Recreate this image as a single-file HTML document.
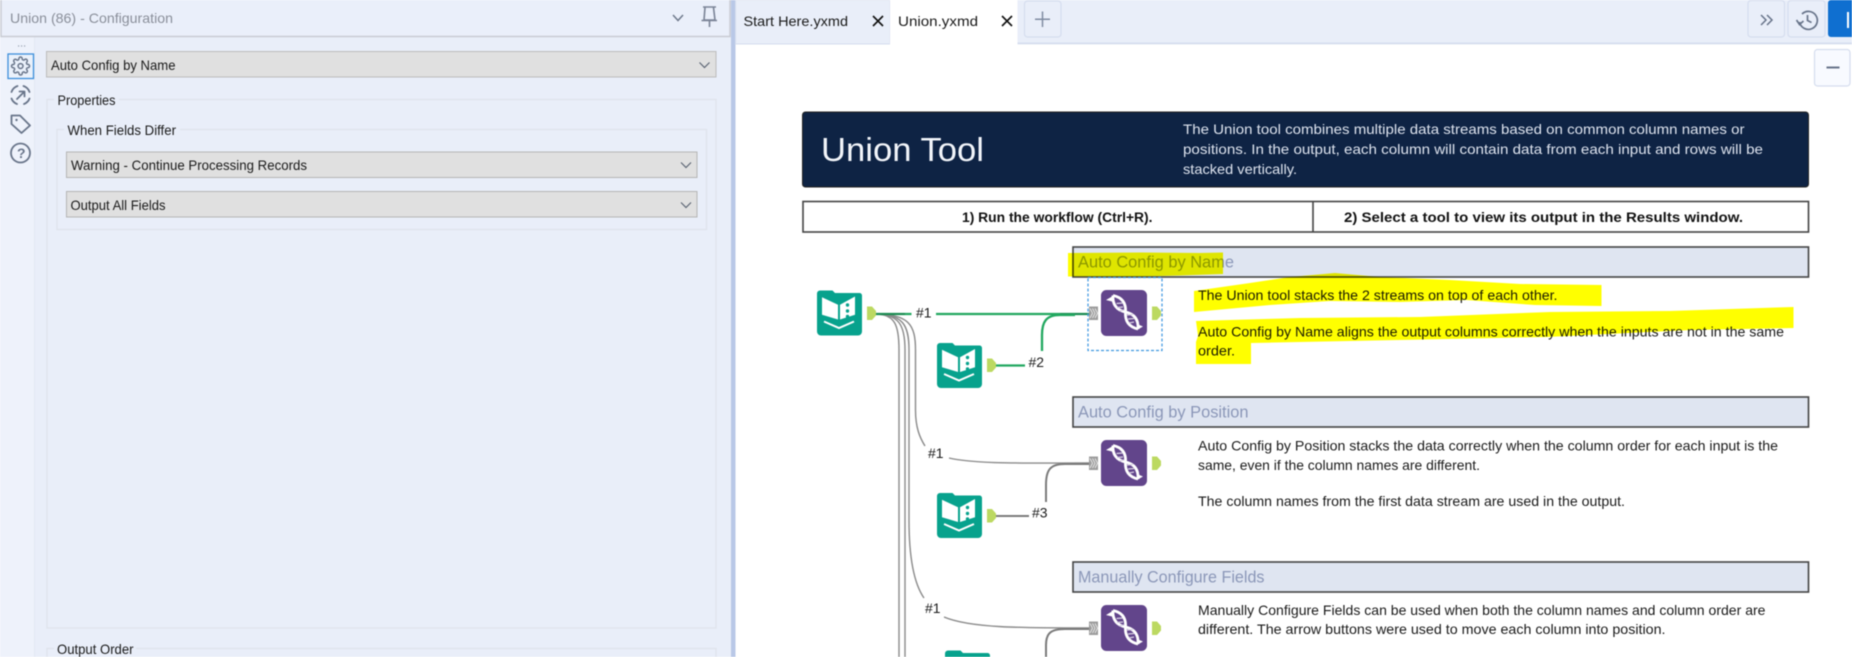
<!DOCTYPE html>
<html><head><meta charset="utf-8"><title>Union Tool</title>
<style>
html,body{margin:0;padding:0;background:#fff;width:1852px;height:657px;overflow:hidden}
svg{display:block;filter:blur(.4px)}
text{font-family:"Liberation Sans",sans-serif;font-size:14px;fill:#1a1a1a}
.h{font-size:16.5px;fill:#8b97b8}
.w{fill:#dde3ee}
.b{font-weight:bold;fill:#111;font-size:13.5px}
.y{mix-blend-mode:multiply;fill:#ffff00}
.i{fill:none;stroke:#69758a;stroke-width:1.8;stroke-linecap:round;stroke-linejoin:round}
.c{fill:none;stroke:#5d6675;stroke-width:1.2}
.g{fill:none;stroke:#8a8a8a;stroke-width:1.4}
.gd{fill:none;stroke:#7b7b7b;stroke-width:2}
.gr{fill:none;stroke:#22a860;stroke-width:2.3}
</style></head><body>
<svg width="1852" height="657" viewBox="0 0 1852 657" xmlns="http://www.w3.org/2000/svg">
<defs>
<g id="book">
<path d="M3,0H15.5L18,2.5H42.5a2.5,2.5 0 0 1 2.5,2.5V41a4,4 0 0 1-4,4H4a4,4 0 0 1-4-4V3a3,3 0 0 1 3-3Z" fill="#07a28d"/>
<path d="M5,6.7L21,14.3V29L5,24.3Z" fill="#fff"/>
<path d="M23,14.3L38,6V24.3L23,29Z" fill="#fff"/>
<circle cx="30.5" cy="14.5" r="1.7" fill="#07a28d"/><circle cx="30.5" cy="20.5" r="1.7" fill="#07a28d"/><circle cx="30.500" cy="26" r="1.7" fill="#07a28d"/>
<path d="M7,31L22,37.5L37,31" fill="none" stroke="#fff" stroke-width="2"/>
</g>
<g id="dna">
<rect width="46" height="46" rx="5.5" fill="#62458b"/>
<path d="M12,5.5Q25.5,8.3 24.5,22Q23.500,35.900 37,39" fill="none" stroke="#fff" stroke-width="2.8"/>
<path d="M12,5.5Q11,19 24.5,22Q38,25 37,39" fill="none" stroke="#fff" stroke-width="2.8"/>
<path d="M5,10L11,6.500V11.500ZM42,36.500L36,34V40Z" fill="#fff"/>
<path d="M15.500,13.500L21.500,13M16,17.500L22,17M18,21L23,20M26,25L32,24.500M27,29L33,28.500M28,33L33,32" stroke="#d8d0e4" stroke-width="1.200" fill="none"/>
</g>
<g id="in"><rect width="9" height="13.5" fill="#9c9c9c"/><path d="M1,2L3.5,6.7L1,11.5M3.5,2L6,6.7L3.5,11.5M6,2L8.5,6.7L6,11.5" fill="none" stroke="#e4e4e4" stroke-width="1"/></g>
<path id="out" d="M0,0H5L9,4.5V9L5,13.5H0Z" fill="#bcd961"/>
</defs>

<rect width="1852" height="657" fill="#fff"/>

<!-- left panel -->
<rect x="0" y="0" width="731" height="657" fill="#e9eef9"/>
<rect x="0" y="36" width="34" height="621" fill="#eef2fb"/>
<rect x="34" y="37" width="1" height="620" fill="#e3e8f2"/>
<rect x="1" y="0" width="729" height="36" fill="#eaeffa"/>
<path d="M1,0V36.500H730V0" fill="none" stroke="#c9ccd3" stroke-width="1.500"/>
<rect x="731" y="0" width="4.5" height="657" fill="#b9c8e7"/>
<text x="10" y="23" textLength="163" lengthAdjust="spacingAndGlyphs" style="fill:#8a8f9a">Union (86) - Configuration</text>
<path d="M673,15L678,20.5L683,15" class="c" style="stroke:#6f7a8c;stroke-width:1.5"/>
<path d="M703,7H716M705,7.5L704,20H715L713.500,7.500M701.500,20.500H717M709.500,20.500V27" fill="none" stroke="#7a8396" stroke-width="1.6"/>

<!-- sidebar icons -->
<path d="M18,46h1.200M21,46h1.200M24,46h1.200" stroke="#9aa3b2" stroke-width="1.200" fill="none"/>
<rect x="8" y="54" width="25.500" height="24.500" fill="#eaf1fb" stroke="#3d8fdb" stroke-width="1.300"/>
<g transform="translate(10.700,56.200) scale(.82)" class="i"><circle cx="12" cy="12" r="3"/><path d="M19.400 15a1.650 1.650 0 0 0 .33 1.820l.06.06a2 2 0 0 1 0 2.830 2 2 0 0 1-2.830 0l-.06-.06a1.650 1.650 0 0 0-1.820-.33 1.650 1.650 0 0 0-1 1.510V21a2 2 0 0 1-2 2 2 2 0 0 1-2-2v-.09A1.650 1.650 0 0 0 9 19.400a1.650 1.650 0 0 0-1.820.33l-.06.06a2 2 0 0 1-2.830 0 2 2 0 0 1 0-2.830l.06-.06a1.650 1.650 0 0 0 .33-1.820 1.650 1.650 0 0 0-1.510-1H3a2 2 0 0 1-2-2 2 2 0 0 1 2-2h.09A1.650 1.650 0 0 0 4.600 9a1.650 1.650 0 0 0-.33-1.820l-.06-.06a2 2 0 0 1 0-2.830 2 2 0 0 1 2.830 0l.06.06a1.650 1.650 0 0 0 1.820.33H9a1.650 1.650 0 0 0 1-1.510V3a2 2 0 0 1 2-2 2 2 0 0 1 2 2v.09a1.650 1.650 0 0 0 1 1.510 1.650 1.650 0 0 0 1.820-.33l.06-.06a2 2 0 0 1 2.830 0 2 2 0 0 1 0 2.830l-.06.06a1.650 1.650 0 0 0-.33 1.820V9a1.650 1.650 0 0 0 1.510 1H21a2 2 0 0 1 2 2 2 2 0 0 1-2 2h-.09a1.650 1.650 0 0 0-1.510 1z"/></g>
<path d="M11.500,92A9.500,9.500 0 0 1 17.500,86M23.500,86A9.500,9.500 0 0 1 29.500,92M29.500,98.500A9.500,9.500 0 0 1 24,104M17,104A9.500,9.500 0 0 1 11.500,98.500M17,99L24,92M19.500,91.500H24.500V96.500" class="i"/>
<path d="M11.500,115.500H20L30,125.500L21.500,133L11.500,124Z" class="i"/><circle cx="16.500" cy="120" r="1.200" fill="#69758a"/>
<circle cx="20.500" cy="153" r="9.500" class="i"/>
<text x="17" y="158" style="font-size:14px;font-weight:bold;fill:#69758a">?</text>

<!-- dropdowns & groups -->
<rect x="46.500" y="51.500" width="669.500" height="25.500" fill="#e0e0e0" stroke="#bcbcbc"/>
<text x="51" y="70" textLength="124.500" lengthAdjust="spacingAndGlyphs">Auto Config by Name</text>
<path d="M699.500,62.500L704.500,67.500L709.500,62.500" class="c"/>

<rect x="47" y="99.500" width="669" height="528.500" fill="none" stroke="#dfe3ec" stroke-width="1.300"/>
<rect x="54" y="92" width="65" height="16" fill="#e9eef9"/>
<text x="57.500" y="105" textLength="58" lengthAdjust="spacingAndGlyphs">Properties</text>
<rect x="57" y="129.500" width="649.500" height="100" fill="none" stroke="#dfe3ec" stroke-width="1.300"/>
<rect x="64" y="122" width="116" height="16" fill="#e9eef9"/>
<text x="67.500" y="135" textLength="108.500" lengthAdjust="spacingAndGlyphs">When Fields Differ</text>

<rect x="66.500" y="152" width="630.500" height="25.500" fill="#e0e0e0" stroke="#b5b5b5"/>
<text x="71" y="170" textLength="236" lengthAdjust="spacingAndGlyphs">Warning - Continue Processing Records</text>
<path d="M681,162.500L686,167.500L691,162.500" class="c"/>
<rect x="66.500" y="191.500" width="630.500" height="25.500" fill="#e0e0e0" stroke="#b5b5b5"/>
<text x="70.500" y="210" textLength="95" lengthAdjust="spacingAndGlyphs">Output All Fields</text>
<path d="M681,202.500L686,207.500L691,202.500" class="c"/>

<path d="M47,657V648.500H716V657" fill="none" stroke="#dfe3ec" stroke-width="1.300"/>
<rect x="54" y="642" width="82" height="15" fill="#e9eef9"/>
<text x="57" y="654" textLength="76.500" lengthAdjust="spacingAndGlyphs">Output Order</text>

<!-- tab bar -->
<rect x="735.500" y="0" width="1116.500" height="44" fill="#e9eef9"/>
<rect x="735.500" y="42.500" width="1116.500" height="1.800" fill="#d5ddee"/>
<rect x="735.500" y="0" width="154.500" height="44" fill="#e9eef9" stroke="#d5ddee"/>
<rect x="890" y="0" width="127.500" height="44.500" fill="#fff"/>
<text x="743.500" y="26" textLength="104.500" lengthAdjust="spacingAndGlyphs">Start Here.yxmd</text>
<path d="M873,16L883,26M883,16L873,26" stroke="#111" stroke-width="1.600" fill="none"/>
<text x="898" y="26" textLength="80" lengthAdjust="spacingAndGlyphs">Union.yxmd</text>
<path d="M1002,16L1012,26M1012,16L1002,26" stroke="#111" stroke-width="1.600" fill="none"/>
<rect x="1024.500" y="1" width="36.500" height="36" rx="3" fill="#e9eef9" stroke="#d5ddee" stroke-width="1.200"/>
<path d="M1042.500,11.500V27M1035,19.300H1050" stroke="#7f8ba1" stroke-width="1.500" fill="none"/>

<rect x="1748" y="0.500" width="36.500" height="36.500" rx="3" fill="#e9eef9" stroke="#d5ddee" stroke-width="1.200"/>
<path d="M1761,15L1766,20L1761,25M1767,15L1772,20L1767,25" fill="none" stroke="#68748a" stroke-width="1.500"/>
<rect x="1788" y="0.500" width="37" height="36.500" rx="3" fill="#e9eef9" stroke="#d5ddee" stroke-width="1.200"/>
<path d="M1799.500,22A9,9 0 1 0 1802,14M1796.500,20L1799.500,24.500L1803.500,21M1807.500,15V20.500L1811.500,22.500" fill="none" stroke="#68748a" stroke-width="1.700"/>
<path d="M1831,0H1852V37H1831A3,3 0 0 1 1828,34V3A3,3 0 0 1 1831,0Z" fill="#0f6fd0"/>
<path d="M1848,12V28" stroke="#fff" stroke-width="2" fill="none"/>
<rect x="1814.500" y="49.500" width="35.500" height="36.500" rx="3" fill="#f8faff" stroke="#d5ddee" stroke-width="1.200"/>
<path d="M1826.500,67.500H1839.500" stroke="#68748a" stroke-width="2" fill="none"/>

<!-- banner -->
<rect x="802.500" y="112" width="1006" height="75" rx="3" fill="#0e2344" stroke="#222" stroke-width="1"/>
<text x="821" y="161" textLength="163" lengthAdjust="spacingAndGlyphs" style="font-size:33px;fill:#f2f5fa">Union Tool</text>
<text class="w" x="1183" y="134" textLength="561.500" lengthAdjust="spacingAndGlyphs">The Union tool combines multiple data streams based on common column names or</text>
<text class="w" x="1183" y="154" textLength="580" lengthAdjust="spacingAndGlyphs">positions. In the output, each column will contain data from each input and rows will be</text>
<text class="w" x="1183" y="174" textLength="114" lengthAdjust="spacingAndGlyphs">stacked vertically.</text>

<!-- table -->
<rect x="803" y="201.500" width="1005.500" height="30.500" fill="#fff" stroke="#444" stroke-width="1.600"/>
<path d="M1313,201.500V232" stroke="#444" stroke-width="1.600"/>
<text class="b" x="962" y="222" textLength="190.500" lengthAdjust="spacingAndGlyphs">1) Run the workflow (Ctrl+R).</text>
<text class="b" x="1344" y="222" textLength="399" lengthAdjust="spacingAndGlyphs">2) Select a tool to view its output in the Results window.</text>

<!-- section headers -->
<rect x="1073" y="247" width="735.500" height="30" fill="#dfe5f1" stroke="#444" stroke-width="1.600"/>
<text class="h" x="1078" y="267.500" textLength="156" lengthAdjust="spacingAndGlyphs">Auto Config by Name</text>
<rect x="1073" y="397" width="735.500" height="30" fill="#dfe5f1" stroke="#444" stroke-width="1.600"/>
<text class="h" x="1078" y="417.500" textLength="170.500" lengthAdjust="spacingAndGlyphs">Auto Config by Position</text>
<rect x="1073" y="562" width="735.500" height="30" fill="#dfe5f1" stroke="#444" stroke-width="1.600"/>
<text class="h" x="1078" y="582.500" textLength="186.500" lengthAdjust="spacingAndGlyphs">Manually Configure Fields</text>

<!-- body copy -->
<text x="1198" y="300" textLength="359.500" lengthAdjust="spacingAndGlyphs">The Union tool stacks the 2 streams on top of each other.</text>
<text x="1198" y="336.500" textLength="586" lengthAdjust="spacingAndGlyphs">Auto Config by Name aligns the output columns correctly when the inputs are not in the same</text>
<text x="1198" y="355.500" textLength="37" lengthAdjust="spacingAndGlyphs">order.</text>
<text x="1198" y="450.500" textLength="580" lengthAdjust="spacingAndGlyphs">Auto Config by Position stacks the data correctly when the column order for each input is the</text>
<text x="1198" y="470" textLength="282" lengthAdjust="spacingAndGlyphs">same, even if the column names are different.</text>
<text x="1198" y="506" textLength="427" lengthAdjust="spacingAndGlyphs">The column names from the first data stream are used in the output.</text>
<text x="1198" y="615" textLength="567.500" lengthAdjust="spacingAndGlyphs">Manually Configure Fields can be used when both the column names and column order are</text>
<text x="1198" y="634" textLength="467.500" lengthAdjust="spacingAndGlyphs">different. The arrow buttons were used to move each column into position.</text>

<!-- connections: gray -->
<path d="M875,314C895,314 899,325 899,350V657" class="g"/>
<path d="M875,314C899,314 905,325 905,350V657" class="g"/>
<path d="M875,314C903,314 909,325 909,350V520C909,560 915,585 924,598" class="g"/>
<path d="M875,314C909,314 915.500,325 915.500,350V410C915.500,428 920,438 925,446" class="g"/>
<path d="M949,458C975,464 1020,463 1090,463" class="g"/>
<path d="M944,617C970,628 1020,628 1090,628" class="g"/>
<path d="M1046,502V485C1046,470 1050,464 1065,464H1090" class="gd"/>
<path d="M996,516H1029" class="gd"/>
<path d="M1046,657V645C1046,634 1050,629 1065,629H1090" class="gd"/>

<!-- connections: green -->
<path d="M875,314H911.500M936,314H1090" class="gr"/>
<path d="M875,314H905M1060,314H1090" fill="none" stroke="#1a8a50" stroke-width="2"/>
<path d="M995,365.500H1025" class="gr"/>
<path d="M1042,351V335C1042,322 1046,315 1060,315H1075" class="gr"/>

<text x="916" y="317.500" textLength="15.500" lengthAdjust="spacingAndGlyphs">#1</text>
<text x="1028.500" y="367" textLength="15.500" lengthAdjust="spacingAndGlyphs">#2</text>
<text x="928" y="458" textLength="15.500" lengthAdjust="spacingAndGlyphs">#1</text>
<text x="925" y="613" textLength="15.500" lengthAdjust="spacingAndGlyphs">#1</text>
<text x="1032" y="517.500" textLength="15.500" lengthAdjust="spacingAndGlyphs">#3</text>

<!-- nodes -->
<use href="#book" x="817" y="290.500"/><use href="#out" x="867" y="306.500"/>
<use href="#book" x="937" y="343"/><use href="#out" x="987" y="358.500"/>
<use href="#book" x="937" y="493"/><use href="#out" x="987" y="509"/>
<path d="M948,650.500H960.500L963,653H987.500a2.500,2.500 0 0 1 2.500,2.500V657H945V653.500a3,3 0 0 1 3-3Z" fill="#07a28d"/>
<use href="#in" x="1089" y="306.500"/><use href="#dna" x="1101" y="290"/><use href="#out" x="1152" y="306.500"/>
<use href="#in" x="1089" y="456.500"/><use href="#dna" x="1101" y="440"/><use href="#out" x="1152" y="456.500"/>
<use href="#in" x="1089" y="621.500"/><use href="#dna" x="1101" y="605"/><use href="#out" x="1152" y="621.500"/>
<rect x="1088" y="277.500" width="74" height="73" fill="none" stroke="#3c96e0" stroke-width="1.200" stroke-dasharray="3 2"/>

<!-- yellow highlighter -->
<path class="y" d="M1068,253L1140,252.500L1200,253L1223,252.500V274L1180,275.500L1140,276.500H1068Z"/>
<path class="y" d="M1194,291L1250,283L1290,277L1335,273L1380,277L1450,280L1520,284L1601.500,285V306L1535,305L1466,300L1400,302L1330,301L1270,305L1194,312Z"/>
<path class="y" d="M1196,321L1300,318L1420,317L1550,312L1670,311L1793.500,307V328L1690,330L1547,337L1400,340L1251,343V364H1196V342L1198,336Z"/>
</svg>
</body></html>
